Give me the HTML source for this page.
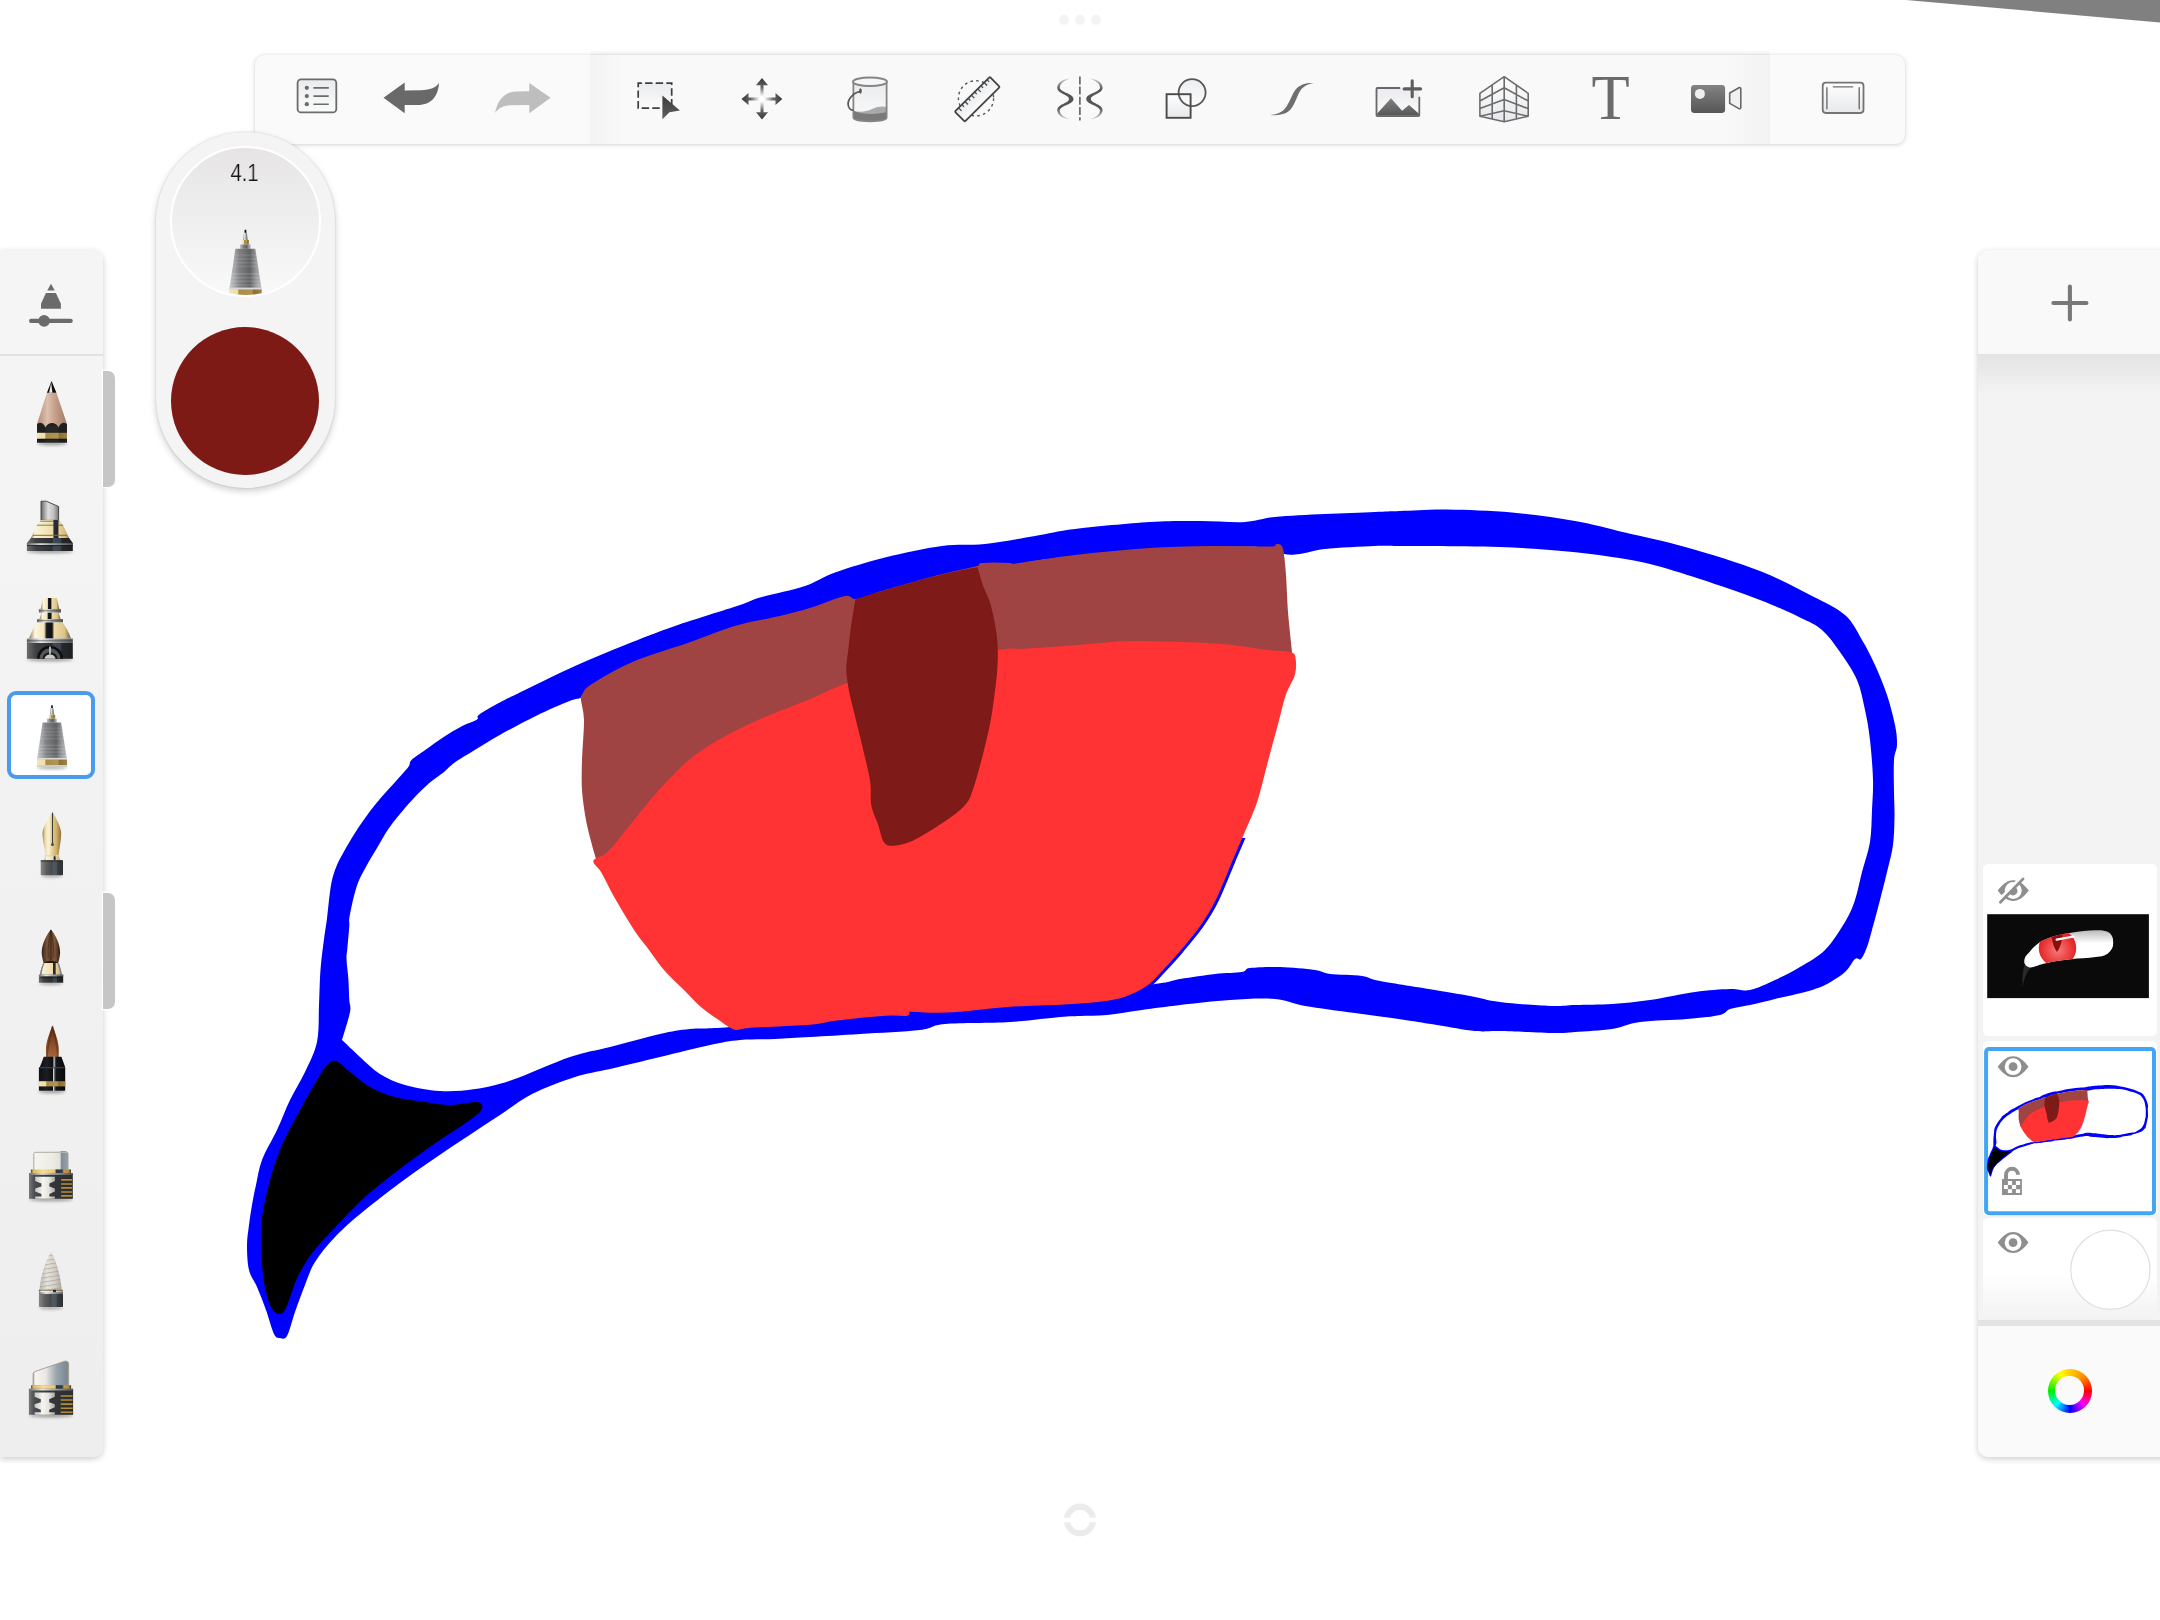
<!DOCTYPE html>
<html lang="en">
<head>
<meta charset="utf-8">
<title>Sketchbook</title>
<style>
*{box-sizing:border-box;margin:0;padding:0}
html,body{width:2160px;height:1620px;overflow:hidden;background:#fff;font-family:"Liberation Sans",sans-serif}
.abs{position:absolute}
#canvas{position:absolute;left:0;top:0;width:2160px;height:1620px}
#wedge{position:absolute;left:0;top:0;width:2160px;height:40px}
.dots{position:absolute;left:1057px;top:14px;width:46px;height:12px}
.dots i{position:absolute;top:1px;width:10px;height:10px;border-radius:50%;background:#f4f4f4}
#toolbar{position:absolute;left:255px;top:55px;width:1650px;height:89px;background:#fafafa;border-radius:9px;box-shadow:0 1px 5px rgba(0,0,0,.16),0 0 2px rgba(0,0,0,.08)}
#toolbar .mid{position:absolute;left:335px;top:0;width:1180px;height:89px;background:linear-gradient(90deg,#f3f3f3 0,#f9f9f9 34px,#f9f9f9 1130px,#f3f3f3 1180px)}
#toolbar .midtop{position:absolute;left:335px;top:-6px;width:1180px;height:6px;background:linear-gradient(180deg,rgba(0,0,0,0),rgba(0,0,0,.045))}
#toolbar svg{position:absolute;left:0;top:0}
#left{position:absolute;left:0;top:250px;width:103px;height:1207px;background:linear-gradient(180deg,#f5f5f5,#eeeeee);border-radius:0 10px 10px 0;box-shadow:0 2px 6px rgba(0,0,0,.2)}
#left .hd{position:absolute;left:0;top:0;width:103px;height:106px;background:#f5f5f5;border-bottom:2px solid #e2e2e2;border-radius:0 9px 0 0}
.grip{position:absolute;left:103px;width:12px;background:#c6c6c6;border-radius:0 7px 7px 0;box-shadow:0 0 0 1.200px #fff}
#sel{position:absolute;left:7px;top:691px;width:88px;height:88px;border:4.300px solid #4a9beb;border-radius:9px;background:#fff}
#puck{position:absolute;left:155.500px;top:131.500px;width:179px;height:356.500px;border-radius:89.500px;background:#f4f4f4;box-shadow:0 3px 7px rgba(0,0,0,.2),0 0 2px rgba(0,0,0,.14)}
#puck .b{position:absolute;left:14px;top:14px;width:151px;height:151px;border-radius:50%;background:linear-gradient(180deg,#e6e4e4 0,#efeeee 45%,#f9f9f9 100%);border:2px solid #fff;overflow:hidden}
#puck .b svg{position:absolute;left:-2px;top:-2px}
#puck .c{position:absolute;left:15.500px;top:195.500px;width:148px;height:148px;border-radius:50%;background:#7e1a16}
#puck .t{position:absolute;left:-1px;top:29.500px;width:179px;text-align:center;font-size:23.500px;line-height:24px;color:#161616;transform:scaleX(.86);will-change:transform;-webkit-text-stroke:.2px #ebeaea}
#right{position:absolute;left:1978px;top:250px;width:190px;height:1207px;background:#f3f3f3;border-radius:10px 0 0 10px;box-shadow:0 2px 6px rgba(0,0,0,.2);overflow:hidden}
#right .hd{position:absolute;left:0;top:0;width:190px;height:104px;background:#f9f9f9}
#right .sh{position:absolute;left:0;top:104px;width:190px;height:40px;background:linear-gradient(180deg,#e3e3e3,#f3f3f3)}
#right .ft{position:absolute;left:0;top:1070px;width:190px;height:137px;background:#fafafa;border-top:6px solid #e3e3e3}
#wheel{position:absolute;left:2047.600px;top:1368.500px;width:44.400px;height:44.400px;border-radius:50%;background:conic-gradient(from 90deg,#ff0000 0deg,#ff00ff 45deg,#0000ff 90deg,#00ffff 135deg,#00ee00 180deg,#ffff00 240deg,#ff8800 315deg,#ff0000 360deg)}
#wheel i{position:absolute;left:7.800px;top:7.800px;width:28.800px;height:28.800px;border-radius:50%;background:#fafafa}
.layer{position:absolute;left:5px;width:174px;background:#fff;border-radius:5px}
#sync{position:absolute;left:1060px;top:1500px;width:40px;height:40px}
</style>
</head>
<body>
<svg id="canvas" viewBox="0 0 2160 1620">
<!--DRAWING-->
<g id="eye">
<path fill="#0000FF" d="M280.0 1338.0C277.8 1337.7 276.3 1338.7 274.0 1334.0C271.7 1329.3 268.8 1317.8 266.0 1310.0C263.2 1302.2 259.8 1293.7 257.0 1287.0C254.2 1280.3 250.7 1277.0 249.0 1270.0C247.3 1263.0 247.0 1252.5 247.0 1245.0C247.0 1237.5 248.2 1231.7 249.0 1225.0C249.8 1218.3 250.8 1211.7 252.0 1205.0C253.2 1198.3 254.3 1192.5 256.0 1185.0C257.7 1177.5 258.5 1169.2 262.0 1160.0C265.5 1150.8 272.3 1140.0 277.0 1130.0C281.7 1120.0 285.3 1109.7 290.0 1100.0C294.7 1090.3 300.5 1081.7 305.0 1072.0C309.5 1062.3 314.7 1053.2 317.0 1042.0C319.3 1030.8 318.5 1015.7 319.0 1005.0C319.5 994.3 319.6 985.7 320.0 978.0C320.4 970.3 320.8 965.8 321.5 959.0C322.2 952.2 323.4 943.8 324.3 937.0C325.2 930.2 326.2 924.7 327.0 918.5C327.8 912.3 328.2 906.2 329.0 900.0C329.8 893.8 330.5 887.0 331.7 881.5C332.9 876.0 334.3 871.6 336.3 866.7C338.3 861.8 340.6 857.6 343.7 852.0C346.8 846.4 351.1 839.2 354.8 833.3C358.5 827.4 361.7 822.6 366.0 816.7C370.3 810.8 375.8 803.9 380.7 798.0C385.6 792.1 391.0 786.7 395.6 781.5C400.2 776.3 405.9 770.2 408.5 766.7C411.1 763.2 408.5 763.0 411.3 760.2C414.1 757.4 419.8 753.9 425.2 750.0C430.6 746.1 437.5 741.0 443.7 737.0C449.9 733.0 456.6 728.9 462.2 726.0C467.8 723.1 474.2 721.3 477.0 719.4C479.8 717.5 475.3 717.6 479.0 714.8C482.7 712.0 491.6 706.9 499.3 702.8C507.0 698.7 512.4 696.1 525.0 690.0C537.6 683.9 558.3 673.5 575.0 666.0C591.7 658.5 608.3 651.7 625.0 645.0C641.7 638.3 655.8 632.7 675.0 626.0C694.2 619.3 725.8 609.8 740.0 605.0C754.2 600.2 749.2 600.7 760.0 597.5C770.8 594.3 792.5 590.2 805.0 586.0C817.5 581.8 821.7 577.2 835.0 572.5C848.3 567.8 867.2 561.9 885.0 557.5C902.8 553.1 925.3 548.2 942.0 546.0C958.7 543.8 969.5 545.7 985.0 544.0C1000.5 542.3 1020.0 538.5 1035.0 536.0C1050.0 533.5 1055.8 531.3 1075.0 529.0C1094.2 526.7 1129.2 523.3 1150.0 522.0C1170.8 520.7 1184.2 521.0 1200.0 521.0C1215.8 521.0 1232.5 522.7 1245.0 522.0C1257.5 521.3 1261.7 518.3 1275.0 517.0C1288.3 515.7 1308.3 514.8 1325.0 514.0C1341.7 513.2 1362.5 512.5 1375.0 512.0C1387.5 511.5 1388.0 511.4 1400.0 511.0C1412.0 510.6 1428.3 509.2 1447.0 509.5C1465.7 509.8 1490.7 510.6 1512.0 512.5C1533.3 514.4 1556.2 517.7 1575.0 521.0C1593.8 524.3 1606.3 528.1 1625.0 532.5C1643.7 536.9 1664.5 541.1 1687.0 547.5C1709.5 553.9 1739.2 562.9 1760.0 571.0C1780.8 579.1 1797.8 588.7 1812.0 596.0C1826.2 603.3 1836.7 607.7 1845.0 615.0C1853.3 622.3 1857.0 631.7 1862.0 640.0C1867.0 648.3 1870.8 655.8 1875.0 665.0C1879.2 674.2 1883.7 685.0 1887.0 695.0C1890.3 705.0 1893.3 716.7 1895.0 725.0C1896.7 733.3 1897.2 739.2 1897.0 745.0C1896.8 750.8 1894.5 752.2 1894.0 760.0C1893.5 767.8 1893.9 782.5 1894.0 792.0C1894.1 801.5 1894.7 808.2 1894.5 817.0C1894.3 825.8 1894.2 835.8 1893.0 845.0C1891.8 854.2 1889.2 862.8 1887.0 872.0C1884.8 881.2 1882.5 890.3 1880.0 900.0C1877.5 909.7 1874.2 922.2 1872.0 930.0C1869.8 937.8 1868.8 942.2 1867.0 947.0C1865.2 951.8 1863.0 957.0 1861.0 959.0C1859.0 961.0 1857.7 956.8 1855.0 959.0C1852.3 961.2 1850.0 967.7 1845.0 972.0C1840.0 976.3 1831.7 981.7 1825.0 985.0C1818.3 988.3 1813.3 989.7 1805.0 992.0C1796.7 994.3 1784.2 996.8 1775.0 999.0C1765.8 1001.2 1757.5 1003.3 1750.0 1005.0C1742.5 1006.7 1735.0 1007.3 1730.0 1009.0C1725.0 1010.7 1727.2 1013.3 1720.0 1015.0C1712.8 1016.7 1700.3 1017.8 1687.0 1019.0C1673.7 1020.2 1652.5 1020.3 1640.0 1022.0C1627.5 1023.7 1622.8 1027.3 1612.0 1029.0C1601.2 1030.7 1584.5 1031.3 1575.0 1032.0C1565.5 1032.7 1567.5 1033.2 1555.0 1033.0C1542.5 1032.8 1513.3 1031.3 1500.0 1031.0C1486.7 1030.7 1485.5 1032.0 1475.0 1031.0C1464.5 1030.0 1448.7 1026.8 1437.0 1025.0C1425.3 1023.2 1418.7 1022.0 1405.0 1020.0C1391.3 1018.0 1371.7 1015.3 1355.0 1013.0C1338.3 1010.7 1318.3 1008.3 1305.0 1006.0C1291.7 1003.7 1287.5 1000.0 1275.0 999.0C1262.5 998.0 1245.8 999.0 1230.0 1000.0C1214.2 1001.0 1194.7 1003.3 1180.0 1005.0C1165.3 1006.7 1154.2 1008.3 1142.0 1010.0C1129.8 1011.7 1117.3 1014.0 1107.0 1015.0C1096.7 1016.0 1087.8 1015.7 1080.0 1016.0C1072.2 1016.3 1071.7 1016.0 1060.0 1017.0C1048.3 1018.0 1029.2 1020.8 1010.0 1022.0C990.8 1023.2 960.0 1022.7 945.0 1024.0C930.0 1025.3 934.2 1028.3 920.0 1030.0C905.8 1031.7 878.3 1032.8 860.0 1034.0C841.7 1035.2 824.2 1036.2 810.0 1037.0C795.8 1037.8 786.7 1038.5 775.0 1039.0C763.3 1039.5 750.8 1039.0 740.0 1040.0C729.2 1041.0 723.3 1042.2 710.0 1045.0C696.7 1047.8 676.7 1053.0 660.0 1057.0C643.3 1061.0 624.2 1065.7 610.0 1069.0C595.8 1072.3 588.0 1072.8 575.0 1077.0C562.0 1081.2 544.5 1087.7 532.0 1094.0C519.5 1100.3 511.7 1107.3 500.0 1115.0C488.3 1122.7 476.2 1130.5 462.0 1140.0C447.8 1149.5 431.2 1160.3 415.0 1172.0C398.8 1183.7 378.3 1199.2 365.0 1210.0C351.7 1220.8 343.3 1228.3 335.0 1237.0C326.7 1245.7 320.0 1254.0 315.0 1262.0C310.0 1270.0 308.3 1276.7 305.0 1285.0C301.7 1293.3 298.0 1303.5 295.0 1312.0C292.0 1320.5 289.5 1331.7 287.0 1336.0C284.5 1340.3 282.2 1338.3 280.0 1338.0Z"/>
<path fill="#fff" d="M342.0 1040.0C343.3 1035.3 348.8 1018.7 350.0 1012.0C351.2 1005.3 349.6 1005.7 349.3 1000.0C349.0 994.3 348.8 984.8 348.3 978.0C347.8 971.2 346.6 964.0 346.5 959.0C346.4 954.0 346.9 953.5 347.4 948.0C347.9 942.5 349.0 930.9 349.3 926.0C349.6 921.1 348.7 922.8 349.3 918.5C349.9 914.2 351.5 906.2 353.0 900.0C354.5 893.8 356.3 887.0 358.5 881.5C360.7 876.0 362.9 872.3 366.0 866.7C369.1 861.1 373.3 854.2 377.0 848.0C380.7 841.8 384.3 835.1 388.0 829.6C391.7 824.1 395.0 820.1 399.3 814.8C403.6 809.5 409.1 803.2 414.0 798.0C418.9 792.8 424.1 787.6 429.0 783.3C433.9 779.0 439.5 775.6 443.7 772.2C447.9 768.8 449.4 766.4 454.0 763.0C458.6 759.6 463.9 756.6 471.5 752.0C479.1 747.4 488.5 741.2 499.3 735.2C510.1 729.2 524.6 721.4 536.3 715.7C548.0 710.0 562.0 704.1 569.6 701.0C577.2 697.9 578.3 699.7 582.0 697.0C585.7 694.3 583.2 690.8 592.0 685.0C600.8 679.2 619.5 668.7 635.0 662.0C650.5 655.3 668.3 650.8 685.0 645.0C701.7 639.2 719.2 631.7 735.0 627.0C750.8 622.3 767.5 620.0 780.0 617.0C792.5 614.0 799.2 612.3 810.0 609.0C820.8 605.7 837.3 598.5 845.0 597.0C852.7 595.5 849.3 601.0 856.0 600.0C862.7 599.0 871.8 594.8 885.0 591.0C898.2 587.2 920.0 580.7 935.0 577.0C950.0 573.3 966.7 571.2 975.0 569.0C983.3 566.8 978.8 564.7 985.0 564.0C991.2 563.3 1003.7 565.5 1012.0 565.0C1020.3 564.5 1024.5 562.5 1035.0 561.0C1045.5 559.5 1055.8 558.0 1075.0 556.0C1094.2 554.0 1127.2 550.5 1150.0 549.0C1172.8 547.5 1192.0 547.2 1212.0 547.0C1232.0 546.8 1258.0 546.3 1270.0 547.5C1282.0 548.7 1279.0 552.9 1284.0 554.0C1289.0 555.1 1293.2 554.8 1300.0 554.0C1306.8 553.2 1312.5 550.3 1325.0 549.0C1337.5 547.7 1362.5 546.5 1375.0 546.0C1387.5 545.5 1390.0 546.0 1400.0 546.0C1410.0 546.0 1418.3 545.8 1435.0 546.0C1451.7 546.2 1478.8 546.2 1500.0 547.0C1521.2 547.8 1543.3 549.3 1562.0 551.0C1580.7 552.7 1597.3 554.8 1612.0 557.0C1626.7 559.2 1635.3 560.3 1650.0 564.0C1664.7 567.7 1681.7 573.0 1700.0 579.0C1718.3 585.0 1743.3 593.6 1760.0 600.0C1776.7 606.4 1789.7 612.5 1800.0 617.5C1810.3 622.5 1815.3 624.2 1822.0 630.0C1828.7 635.8 1834.2 643.7 1840.0 652.0C1845.8 660.3 1852.8 670.3 1857.0 680.0C1861.2 689.7 1862.8 700.0 1865.0 710.0C1867.2 720.0 1868.7 728.3 1870.0 740.0C1871.3 751.7 1872.7 768.3 1873.0 780.0C1873.3 791.7 1872.5 799.7 1872.0 810.0C1871.5 820.3 1871.7 831.7 1870.0 842.0C1868.3 852.3 1864.5 862.3 1862.0 872.0C1859.5 881.7 1857.8 891.7 1855.0 900.0C1852.2 908.3 1850.0 913.7 1845.0 922.0C1840.0 930.3 1832.5 942.5 1825.0 950.0C1817.5 957.5 1808.3 962.0 1800.0 967.0C1791.7 972.0 1783.3 976.2 1775.0 980.0C1766.7 983.8 1757.5 988.5 1750.0 990.0C1742.5 991.5 1739.2 988.7 1730.0 989.0C1720.8 989.3 1708.3 990.2 1695.0 992.0C1681.7 993.8 1663.8 998.0 1650.0 1000.0C1636.2 1002.0 1624.5 1003.2 1612.0 1004.0C1599.5 1004.8 1585.3 1004.7 1575.0 1005.0C1564.7 1005.3 1562.5 1006.5 1550.0 1006.0C1537.5 1005.5 1513.3 1003.7 1500.0 1002.0C1486.7 1000.3 1480.8 998.0 1470.0 996.0C1459.2 994.0 1450.0 992.5 1435.0 990.0C1420.0 987.5 1392.2 983.3 1380.0 981.0C1367.8 978.7 1370.3 977.2 1362.0 976.0C1353.7 974.8 1337.8 975.0 1330.0 974.0C1322.2 973.0 1323.3 971.2 1315.0 970.0C1306.7 968.8 1290.8 967.3 1280.0 967.0C1269.2 966.7 1256.3 967.2 1250.0 968.0C1243.7 968.8 1247.8 971.0 1242.0 972.0C1236.2 973.0 1225.3 972.8 1215.0 974.0C1204.7 975.2 1191.3 977.2 1180.0 979.0C1168.7 980.8 1177.0 981.5 1147.0 985.0C1117.0 988.5 1049.5 995.0 1000.0 1000.0C950.5 1005.0 895.0 1010.5 850.0 1015.0C805.0 1019.5 756.7 1024.7 730.0 1027.0C703.3 1029.3 701.7 1027.8 690.0 1029.0C678.3 1030.2 673.3 1031.0 660.0 1034.0C646.7 1037.0 625.0 1043.2 610.0 1047.0C595.0 1050.8 586.3 1051.5 570.0 1057.0C553.7 1062.5 527.8 1074.7 512.0 1080.0C496.2 1085.3 487.0 1087.2 475.0 1089.0C463.0 1090.8 451.7 1091.7 440.0 1091.0C428.3 1090.3 415.0 1087.8 405.0 1085.0C395.0 1082.2 387.5 1078.7 380.0 1074.0C372.5 1069.3 366.3 1062.7 360.0 1057.0C353.7 1051.3 345.0 1042.8 342.0 1040.0Z"/>
<path fill="#000" d="M336.0 1061.0C339.8 1062.2 344.3 1067.7 350.0 1072.0C355.7 1076.3 362.5 1082.8 370.0 1087.0C377.5 1091.2 385.8 1094.5 395.0 1097.0C404.2 1099.5 415.8 1100.7 425.0 1102.0C434.2 1103.3 441.3 1105.0 450.0 1105.0C458.7 1105.0 471.7 1101.3 477.0 1102.0C482.3 1102.7 483.2 1106.0 482.0 1109.0C480.8 1112.0 477.0 1114.8 470.0 1120.0C463.0 1125.2 450.8 1132.5 440.0 1140.0C429.2 1147.5 417.5 1155.5 405.0 1165.0C392.5 1174.5 376.7 1186.6 365.0 1197.0C353.3 1207.4 343.8 1218.2 335.0 1227.5C326.2 1236.8 318.8 1244.2 312.5 1252.5C306.2 1260.8 301.2 1270.0 297.5 1277.5C293.8 1285.0 291.8 1292.6 290.0 1297.5C288.2 1302.4 287.7 1304.5 286.5 1307.0C285.3 1309.5 284.3 1311.3 283.0 1312.5C281.7 1313.7 280.1 1314.1 278.7 1314.0C277.3 1313.9 275.8 1313.2 274.5 1312.0C273.2 1310.8 272.2 1309.4 271.0 1307.0C269.8 1304.6 268.7 1302.0 267.5 1297.5C266.3 1293.0 264.8 1287.9 263.7 1280.0C262.6 1272.1 261.5 1260.4 261.2 1250.0C260.9 1239.6 260.5 1229.2 262.0 1217.5C263.5 1205.8 266.7 1192.1 270.0 1180.0C273.3 1167.9 277.0 1156.7 282.0 1145.0C287.0 1133.3 294.2 1120.8 300.0 1110.0C305.8 1099.2 312.5 1087.5 317.0 1080.0C321.5 1072.5 323.8 1068.2 327.0 1065.0C330.2 1061.8 332.2 1059.8 336.0 1061.0Z"/>
<clipPath id="slc"><rect x="1100" y="838" width="200" height="150"/></clipPath>
<path fill="none" stroke="#0000FF" stroke-width="4" clip-path="url(#slc)" d="M1268.6 762.6C1266.9 768.9 1261.9 790.1 1258.6 800.6C1255.3 811.1 1252.8 815.6 1248.6 825.6C1244.4 835.6 1238.9 848.1 1233.6 860.6C1228.3 873.1 1221.9 889.8 1216.6 900.6C1211.3 911.4 1207.4 917.3 1201.6 925.6C1195.8 933.9 1187.9 943.1 1181.6 950.6C1175.3 958.1 1169.1 964.8 1163.6 970.6C1158.1 976.4 1154.8 981.3 1148.6 985.6C1142.4 989.9 1130.3 994.8 1126.6 996.6"/>
<path fill="#A04343" stroke="#A04343" stroke-width="2" stroke-linejoin="round" d="M598.0 862.0C597.2 859.2 594.8 852.0 593.0 845.0C591.2 838.0 588.7 829.2 587.0 820.0C585.3 810.8 583.7 800.0 583.0 790.0C582.3 780.0 582.7 771.7 583.0 760.0C583.3 748.3 585.2 730.0 585.0 720.0C584.8 710.0 582.3 704.2 582.0 700.0C581.7 695.8 581.3 697.5 583.0 695.0C584.7 692.5 583.3 690.5 592.0 685.0C600.7 679.5 619.5 668.7 635.0 662.0C650.5 655.3 668.3 650.8 685.0 645.0C701.7 639.2 719.2 631.7 735.0 627.0C750.8 622.3 767.5 620.0 780.0 617.0C792.5 614.0 799.2 612.3 810.0 609.0C820.8 605.7 837.3 598.5 845.0 597.0C852.7 595.5 849.3 601.0 856.0 600.0C862.7 599.0 871.8 594.8 885.0 591.0C898.2 587.2 919.7 581.0 935.0 577.0C950.3 573.0 969.2 569.2 977.0 567.0C984.8 564.8 976.5 564.5 982.0 564.0C987.5 563.5 1005.0 563.8 1010.0 564.0C1015.0 564.2 1001.2 566.3 1012.0 565.0C1022.8 563.7 1052.0 558.7 1075.0 556.0C1098.0 553.3 1127.2 550.5 1150.0 549.0C1172.8 547.5 1192.0 547.2 1212.0 547.0C1232.0 546.8 1259.2 547.8 1270.0 547.5C1280.8 547.2 1275.0 544.8 1277.0 545.0C1279.0 545.2 1280.7 544.0 1282.0 549.0C1283.3 554.0 1284.2 564.5 1285.0 575.0C1285.8 585.5 1286.0 599.2 1287.0 612.0C1288.0 624.8 1290.2 643.7 1291.0 652.0C1291.8 660.3 1291.8 660.3 1292.0 662.0L1200 760L900 800L700 880Z"/>
<path fill="#FF3333" stroke="#FF3333" stroke-width="1.5" stroke-linejoin="round" d="M594.0 861.0C594.5 858.2 601.5 857.7 605.0 855.0C608.5 852.3 610.0 850.8 615.0 845.0C620.0 839.2 627.5 829.2 635.0 820.0C642.5 810.8 650.8 800.0 660.0 790.0C669.2 780.0 680.0 768.3 690.0 760.0C700.0 751.7 708.3 746.7 720.0 740.0C731.7 733.3 745.0 726.7 760.0 720.0C775.0 713.3 795.5 706.0 810.0 700.0C824.5 694.0 832.0 689.0 847.0 684.0C862.0 679.0 875.0 675.5 900.0 670.0C925.0 664.5 976.2 654.4 997.0 651.0C1017.8 647.6 1012.0 650.3 1025.0 649.5C1038.0 648.7 1058.3 647.2 1075.0 646.0C1091.7 644.8 1108.3 642.6 1125.0 642.0C1141.7 641.4 1158.3 642.0 1175.0 642.5C1191.7 643.0 1209.2 643.6 1225.0 645.0C1240.8 646.4 1259.0 649.7 1270.0 651.0C1281.0 652.3 1286.8 651.5 1291.0 653.0C1295.2 654.5 1294.5 656.3 1295.0 660.0C1295.5 663.7 1295.7 669.2 1294.0 675.0C1292.3 680.8 1287.8 686.7 1285.0 695.0C1282.2 703.3 1280.0 713.8 1277.0 725.0C1274.0 736.2 1270.3 749.5 1267.0 762.0C1263.7 774.5 1260.3 789.5 1257.0 800.0C1253.7 810.5 1251.2 815.0 1247.0 825.0C1242.8 835.0 1237.3 847.5 1232.0 860.0C1226.7 872.5 1220.3 889.2 1215.0 900.0C1209.7 910.8 1205.8 916.7 1200.0 925.0C1194.2 933.3 1186.3 942.5 1180.0 950.0C1173.7 957.5 1167.5 964.2 1162.0 970.0C1156.5 975.8 1153.2 980.7 1147.0 985.0C1140.8 989.3 1132.8 993.3 1125.0 996.0C1117.2 998.7 1110.8 999.7 1100.0 1001.0C1089.2 1002.3 1075.0 1003.2 1060.0 1004.0C1045.0 1004.8 1026.7 1004.8 1010.0 1006.0C993.3 1007.2 973.3 1010.0 960.0 1011.0C946.7 1012.0 938.3 1012.0 930.0 1012.0C921.7 1012.0 913.8 1010.5 910.0 1011.0C906.2 1011.5 911.2 1014.3 907.0 1015.0C902.8 1015.7 897.0 1014.2 885.0 1015.0C873.0 1015.8 847.5 1018.5 835.0 1020.0C822.5 1021.5 824.2 1022.8 810.0 1024.0C795.8 1025.2 762.5 1026.2 750.0 1027.0C737.5 1027.8 740.0 1030.2 735.0 1029.0C730.0 1027.8 725.5 1023.7 720.0 1020.0C714.5 1016.3 707.8 1012.0 702.0 1007.0C696.2 1002.0 691.2 996.2 685.0 990.0C678.8 983.8 670.8 976.7 665.0 970.0C659.2 963.3 655.0 956.7 650.0 950.0C645.0 943.3 640.8 938.8 635.0 930.0C629.2 921.2 620.5 906.7 615.0 897.0C609.5 887.3 605.5 878.0 602.0 872.0C598.5 866.0 593.5 863.8 594.0 861.0Z"/>
<path fill="#7E1A17" stroke="#7E1A17" stroke-width="1.5" stroke-linejoin="round" d="M856.0 600.0C855.3 604.2 853.2 616.7 852.0 625.0C850.8 633.3 849.8 642.5 849.0 650.0C848.2 657.5 846.8 663.0 847.0 670.0C847.2 677.0 848.5 684.2 850.0 692.0C851.5 699.8 853.7 707.3 856.0 717.0C858.3 726.7 861.5 739.2 864.0 750.0C866.5 760.8 869.7 772.8 871.0 782.0C872.3 791.2 870.7 797.8 872.0 805.0C873.3 812.2 877.0 819.0 879.0 825.0C881.0 831.0 881.8 837.7 884.0 841.0C886.2 844.3 887.7 845.0 892.0 845.0C896.3 845.0 903.7 843.5 910.0 841.0C916.3 838.5 923.3 834.0 930.0 830.0C936.7 826.0 944.2 821.3 950.0 817.0C955.8 812.7 961.3 808.5 965.0 804.0C968.7 799.5 969.2 798.2 972.0 790.0C974.8 781.8 979.0 766.7 982.0 755.0C985.0 743.3 987.8 731.7 990.0 720.0C992.2 708.3 993.8 695.0 995.0 685.0C996.2 675.0 996.8 668.3 997.0 660.0C997.2 651.7 997.2 644.2 996.0 635.0C994.8 625.8 992.3 613.3 990.0 605.0C987.7 596.7 984.2 591.2 982.0 585.0C979.8 578.8 977.8 570.8 977.0 568.0C970.0 569.5 950.3 573.2 935.0 577.0C919.7 580.8 898.2 587.2 885.0 591.0C871.8 594.8 860.8 598.5 856.0 600.0Z"/>
</g>
<!--/DRAWING-->
</svg>
<svg id="wedge" viewBox="0 0 2160 40"><polygon points="1906,0 2160,0 2160,22.5" fill="#808080"/></svg>
<div class="dots"><i style="left:2px"></i><i style="left:18px"></i><i style="left:34px"></i></div>

<div id="toolbar"><div class="mid"></div><div class="midtop"></div>
<svg id="tbicons" width="1650" height="89" viewBox="255 55 1650 89">
<!--TBICONS-->
<defs>
<linearGradient id="gl" x1="0" y1="0" x2="0" y2="1"><stop offset="0" stop-color="#e9ebee"/><stop offset="1" stop-color="#fbfbfb"/></linearGradient>
<linearGradient id="gl2" x1="0" y1="0" x2="0" y2="1"><stop offset="0" stop-color="#ffffff"/><stop offset="1" stop-color="#e6e8eb"/></linearGradient>
<linearGradient id="gd" x1="0" y1="0" x2="0" y2="1"><stop offset="0" stop-color="#838383"/><stop offset="1" stop-color="#565656"/></linearGradient>
<linearGradient id="gcur" x1="0" y1="0" x2="0" y2="1"><stop offset="0" stop-color="#3a3a3a"/><stop offset="1" stop-color="#606060"/></linearGradient>
<radialGradient id="gmv" cx="762" cy="98.9" r="21" gradientUnits="userSpaceOnUse"><stop offset="0" stop-color="#fff"/><stop offset=".12" stop-color="#fff"/><stop offset=".55" stop-color="#666"/><stop offset="1" stop-color="#333"/></radialGradient>
<linearGradient id="gsym" x1="0" y1="76" x2="0" y2="121" gradientUnits="userSpaceOnUse"><stop offset="0" stop-color="#555" stop-opacity=".15"/><stop offset=".3" stop-color="#555"/><stop offset=".7" stop-color="#555"/><stop offset="1" stop-color="#555" stop-opacity=".15"/></linearGradient>
</defs>
<!-- list -->
<rect x="297.6" y="79.4" width="38.7" height="33" rx="3.5" fill="url(#gl)" stroke="#6b6b6b" stroke-width="1.8"/>
<g fill="#6b6b6b"><circle cx="306.8" cy="87.8" r="2.1"/><circle cx="306.8" cy="96.1" r="2.1"/><circle cx="306.8" cy="104.2" r="2.1"/>
<rect x="313.2" y="87" width="15.8" height="1.7" rx=".8"/><rect x="313.2" y="95.2" width="15.8" height="1.7" rx=".8"/><rect x="313.2" y="103.4" width="15.8" height="1.7" rx=".8"/></g>
<!-- undo / redo -->
<path fill="#696969" d="M383.5 97.8L404.7 82.5L404.7 90.4L421 90.2C430 90 436 87.5 439 83C438.5 94 433 105.2 417 105.1L404.7 105.1L404.7 113.2Z"/>
<path fill="#bebebe" d="M550.6 97.8L529.3 82.9L529.3 91.2L517 91.4C503 91.6 497.2 102 495 113C499 107.6 504 105.3 512 105.2L529.3 105.1L529.3 113.2Z"/>
<!-- select -->
<rect x="638.2" y="83.1" width="33.5" height="25" fill="url(#gl)" stroke="#3e3e3e" stroke-width="1.7" stroke-dasharray="7.4 3.2" stroke-dashoffset="3.7"/>
<path fill="url(#gcur)" d="M662.4 95.4L679.9 110.6L669.5 112.2L662.4 119.2Z"/>
<!-- move -->
<path fill="url(#gmv)" d="M762 78L768 85.3L763.5 85.3L763.5 97.4L775.5 97.4L775.5 92.9L782.3 98.9L775.5 104.9L775.5 100.4L763.5 100.4L763.5 112.3L768 112.3L762 119.5L756 112.3L760.5 112.3L760.5 100.4L748.5 100.4L748.5 104.9L741.5 98.9L748.5 92.9L748.5 97.4L760.5 97.4L760.5 85.3L756 85.3Z"/>
<!-- bucket -->
<path d="M853.4 82.5L853.4 117.5C853.4 122.5 886.6 122.5 886.6 117.5L886.6 82.5Z" fill="url(#gl)"/>
<path d="M853.4 110.5C858 112.5 866 112 872 109C878 106 883 106 886.6 107L886.6 117.5C886.6 122.5 853.4 122.5 853.4 117.5Z" fill="#a9a9a9"/>
<path d="M853.4 111C860 113.5 870 114.5 878 113.5C882 113 885 112.5 886.6 112L886.6 117.5C886.6 122.5 853.4 122.5 853.4 117.5Z" fill="#7a7a7a"/>
<path d="M853.4 82.5L853.4 117.5C853.4 122.5 886.6 122.5 886.6 117.5L886.6 82.5" fill="none" stroke="#858585" stroke-width="1.8"/>
<ellipse cx="870" cy="81.8" rx="17" ry="4.2" fill="#f6f6f6" stroke="#858585" stroke-width="2"/>
<path d="M860.3 91.3C852 93 846.5 101 848.5 106.5C849.5 109 851.5 110.3 853.4 110.4" fill="none" stroke="#575757" stroke-width="1.7"/>
<ellipse cx="860.4" cy="91" rx="1.4" ry="2.8" fill="#575757"/>
<!-- ruler -->
<circle cx="976" cy="98.3" r="17.6" fill="none" stroke="#555" stroke-width="1.4" stroke-dasharray="2.6 3.3"/>
<g transform="rotate(-44.7 977.3 99.3)"><rect x="952.7" y="92.2" width="49.3" height="14.2" rx="1" fill="url(#gl)" stroke="#444" stroke-width="1.8"/>
<path d="M958 92.2v4.2M962.5 92.2v3M967 92.2v4.2M971.5 92.2v3M976 92.2v4.2M980.5 92.2v3M985 92.2v4.2M989.5 92.2v3M994 92.2v4.2M998 92.2v3" stroke="#444" stroke-width="1.2" fill="none"/></g>
<!-- symmetry -->
<path d="M1079.9 76.4V120.6" stroke="#555" stroke-width="1.5" stroke-dasharray="8 2.2" fill="none"/>
<path id="symL" d="M1070.600 78.600C1063 79 1057.200 83 1057.200 87.800C1057.200 94 1069 94.500 1069 98.900C1069 103.300 1057.200 104 1057.200 110C1057.200 115 1063 119 1070.600 119.200C1064.500 118 1059.800 114.500 1059.800 110.500C1059.800 105.500 1073.500 104.500 1073.500 98.900C1073.500 93.300 1059.800 92.500 1059.800 87.500C1059.800 83.500 1064.500 80 1070.600 78.600Z" fill="url(#gsym)"/>
<use href="#symL" transform="translate(2159.8 0) scale(-1 1)"/>
<!-- shapes -->
<rect x="1166.600" y="94.200" width="24" height="23.600" fill="url(#gl2)"/><circle cx="1192.100" cy="92.600" r="13.500" fill="url(#gl)" fill-opacity=".8"/>
<circle cx="1192.100" cy="92.600" r="13.500" fill="none" stroke="#585858" stroke-width="1.800"/><rect x="1166.600" y="94.200" width="24" height="23.600" fill="none" stroke="#4a4a4a" stroke-width="1.900"/>
<!-- curve -->
<path fill="#6f6f6f" d="M1270.1 114.9C1276 114.6 1281 113 1284.5 109C1290 103 1291.5 94.5 1296 89C1300.5 84 1306 82.7 1313.9 82.9C1309 83.8 1304.5 85.5 1301.5 89C1297 94.5 1296 103 1290.5 109.5C1286.5 114 1279 116 1270.1 114.9Z"/>
<!-- image -->
<rect x="1376.6" y="88" width="42.6" height="28" fill="url(#gl)"/>
<path d="M1400.2 88H1377.4C1376.9 88 1376.5 88.4 1376.5 88.9V115.2C1376.500 115.700 1376.900 116.100 1377.400 116.100H1418.400C1418.900 116.100 1419.300 115.700 1419.300 115.200V96.800" fill="none" stroke="#686868" stroke-width="1.8"/>
<path d="M1377.200 113.500L1391 98.200L1402.100 110.700L1409 105.100L1418.700 113.500L1418.700 115.600L1377.200 115.600Z" fill="url(#gd)"/>
<path d="M1412.200 80.800V96.800M1404.200 88.900H1420.600" stroke="#5e5e5e" stroke-width="3.100" stroke-linecap="round" fill="none"/>
<!-- perspective grid -->
<path d="M1504.200 76.700L1479.900 93.300V116.250L1504.200 121.800L1528.200 116.250V93.300Z" fill="url(#gl2)"/>
<path d="M1504.200 76.700L1479.900 93.300V116.250L1504.200 121.800L1528.200 116.250V93.300ZM1504.200 76.700V121.800M1492.200 84.900V119M1516.400 84.900V119M1479.900 101L1504.200 87.800L1528.200 101M1479.900 108.600L1504.200 99.600L1528.200 108.600M1479.900 116.250L1504.200 110.700L1528.200 116.250" fill="none" stroke="#6c6c6c" stroke-width="1.6" stroke-linejoin="round"/>
<!-- T -->
<text x="1610.500" y="119.300" font-family="'Liberation Serif',serif" font-size="62.500" text-anchor="middle" fill="#6b6b6b">T</text>
<!-- camera -->
<rect x="1691" y="84.900" width="34.100" height="28.100" rx="3.400" fill="url(#gd)"/>
<circle cx="1699.900" cy="93.900" r="5" fill="#efefef"/>
<path d="M1729.700 93L1739 87.800C1740 87.300 1740.800 87.800 1740.800 88.800V107.600C1740.800 108.600 1740 109.100 1739 108.600L1729.700 103.400Z" fill="#f1f1f1" stroke="#686868" stroke-width="1.600" stroke-linejoin="round"/>
<!-- fullscreen -->
<rect x="1822.700" y="82.700" width="40.800" height="30.300" rx="3.200" fill="url(#gl2)" stroke="#747474" stroke-width="1.800"/>
<path d="M1833.400 86.900H1852.600M1826.900 87.800V108.700M1859.200 87.800V108.700" stroke="#6e6e6e" stroke-width="1.400" stroke-linecap="round" fill="none"/>
<!--/TBICONS-->
</svg>
</div>

<div id="left"><div class="hd"></div>
<div class="grip" style="top:121px;height:116px"></div>
<div class="grip" style="top:643px;height:116px"></div>
</div>
<div id="sel"></div>
<svg class="abs" id="brushes" style="left:0;top:250px" width="120" height="1207" viewBox="0 250 120 1207">
<!--BRUSHES-->
<defs>
<filter id="bl" x="-30%" y="-100%" width="160%" height="300%"><feGaussianBlur stdDeviation="1.6"/></filter>
<linearGradient id="gold1" x1="0" x2="1"><stop offset="0" stop-color="#8f7a4e"/><stop offset=".1" stop-color="#fbf4da"/><stop offset=".45" stop-color="#f3e3b4"/><stop offset=".58" stop-color="#ecd8a2"/><stop offset=".6" stop-color="#2a2d33"/><stop offset=".7" stop-color="#23262b"/><stop offset=".74" stop-color="#e6d09a"/><stop offset=".92" stop-color="#d3b877"/><stop offset="1" stop-color="#7d6a42"/></linearGradient>
<linearGradient id="gold2" x1="0" x2="1"><stop offset="0" stop-color="#f3e4b0"/><stop offset=".25" stop-color="#f1dfa6"/><stop offset=".3" stop-color="#a98c4a"/><stop offset=".7" stop-color="#b3944f"/><stop offset=".75" stop-color="#8a6f38"/><stop offset="1" stop-color="#a1843f"/></linearGradient>
<linearGradient id="gold3" x1="0" x2="1"><stop offset="0" stop-color="#8d7a55"/><stop offset=".14" stop-color="#fcf6df"/><stop offset=".36" stop-color="#f4e5b8"/><stop offset=".42" stop-color="#17181c"/><stop offset=".55" stop-color="#101114"/><stop offset=".6" stop-color="#f0dca6"/><stop offset=".85" stop-color="#dcc388"/><stop offset="1" stop-color="#6b5a38"/></linearGradient>
<linearGradient id="wood" x1="0" x2="1"><stop offset="0" stop-color="#b48c77"/><stop offset=".35" stop-color="#dcbfae"/><stop offset=".6" stop-color="#c6a08b"/><stop offset="1" stop-color="#a07a66"/></linearGradient>
<linearGradient id="dark1" x1="0" x2="1"><stop offset="0" stop-color="#6a6c6e"/><stop offset=".2" stop-color="#3e4042"/><stop offset=".55" stop-color="#2c2e31"/><stop offset=".58" stop-color="#3f4a55"/><stop offset=".73" stop-color="#3a444e"/><stop offset=".76" stop-color="#26282b"/><stop offset="1" stop-color="#1e1f21"/></linearGradient>
<linearGradient id="dark2" x1="0" x2="1"><stop offset="0" stop-color="#858789"/><stop offset=".25" stop-color="#5c5e60"/><stop offset=".5" stop-color="#48494b"/><stop offset=".56" stop-color="#4e5a64"/><stop offset=".72" stop-color="#47535d"/><stop offset=".76" stop-color="#3b3c3e"/><stop offset="1" stop-color="#2f3032"/></linearGradient>
<linearGradient id="silver" x1="0" x2="1"><stop offset="0" stop-color="#6e7073"/><stop offset=".3" stop-color="#e8eaec"/><stop offset=".6" stop-color="#9da1a5"/><stop offset="1" stop-color="#55585b"/></linearGradient>
<linearGradient id="tipg" x1="0" x2="1"><stop offset="0" stop-color="#5e5e5e"/><stop offset=".12" stop-color="#8d8d8d"/><stop offset=".4" stop-color="#dedede"/><stop offset=".7" stop-color="#c2c2c2"/><stop offset=".93" stop-color="#8a8a8a"/><stop offset="1" stop-color="#4d4d4d"/></linearGradient>
<linearGradient id="cone" x1="0" x2="1"><stop offset="0" stop-color="#c4c6c8"/><stop offset=".16" stop-color="#a3a5a8"/><stop offset=".3" stop-color="#808285"/><stop offset=".5" stop-color="#6c6e70"/><stop offset=".64" stop-color="#5f6163"/><stop offset=".8" stop-color="#8f9194"/><stop offset="1" stop-color="#bcbec0"/></linearGradient>
<linearGradient id="nib" x1="0" x2="1"><stop offset="0" stop-color="#9c7f45"/><stop offset=".12" stop-color="#e6d4a0"/><stop offset=".3" stop-color="#fbf4dc"/><stop offset=".48" stop-color="#ecd79c"/><stop offset=".75" stop-color="#cfae66"/><stop offset="1" stop-color="#8f7138"/></linearGradient>
<linearGradient id="hair1" x1="0" x2="1"><stop offset="0" stop-color="#3a2416"/><stop offset=".3" stop-color="#7a563a"/><stop offset=".5" stop-color="#5b3c26"/><stop offset=".7" stop-color="#7e5a3d"/><stop offset="1" stop-color="#36200f"/></linearGradient>
<linearGradient id="hair2" x1="0" y1="0" x2="0" y2="1"><stop offset="0" stop-color="#5a2e17"/><stop offset=".6" stop-color="#8a4f2c"/><stop offset="1" stop-color="#a5673d"/></linearGradient>
<linearGradient id="blk" x1="0" x2="1"><stop offset="0" stop-color="#101114"/><stop offset=".3" stop-color="#1c1e24"/><stop offset=".52" stop-color="#0c0d10"/><stop offset=".56" stop-color="#e8e8ea"/><stop offset=".6" stop-color="#50525a"/><stop offset=".66" stop-color="#15161a"/><stop offset="1" stop-color="#0a0a0c"/></linearGradient>
<linearGradient id="ers" x1="0" x2="1"><stop offset="0" stop-color="#b0aba2"/><stop offset=".06" stop-color="#f6f4f0"/><stop offset=".55" stop-color="#eeebe5"/><stop offset=".76" stop-color="#e4e1dc"/><stop offset=".8" stop-color="#7f909c"/><stop offset=".93" stop-color="#8d9ba6"/><stop offset="1" stop-color="#a7a49c"/></linearGradient>
<linearGradient id="ers2" x1="0" x2="1"><stop offset="0" stop-color="#a8a49b"/><stop offset=".06" stop-color="#f7f5f0"/><stop offset=".35" stop-color="#ebe8e1"/><stop offset=".65" stop-color="#9aa6af"/><stop offset=".9" stop-color="#7d8d99"/><stop offset="1" stop-color="#8d8b86"/></linearGradient>
<linearGradient id="ebody" x1="0" x2="1"><stop offset="0" stop-color="#77797c"/><stop offset=".12" stop-color="#4b4d50"/><stop offset=".45" stop-color="#36383c"/><stop offset="1" stop-color="#2b2c30"/></linearGradient>
<linearGradient id="egold" x1="0" x2="1"><stop offset="0" stop-color="#3a4650"/><stop offset=".06" stop-color="#e2b95a"/><stop offset=".3" stop-color="#f6dc96"/><stop offset=".6" stop-color="#e8c46c"/><stop offset=".63" stop-color="#2c3842"/><stop offset=".78" stop-color="#33404a"/><stop offset=".82" stop-color="#c89a3c"/><stop offset=".94" stop-color="#b88a30"/><stop offset="1" stop-color="#2c3842"/></linearGradient>
<linearGradient id="spool" x1="0" x2="1"><stop offset="0" stop-color="#c9c7c1"/><stop offset=".4" stop-color="#f6f5f1"/><stop offset=".7" stop-color="#e5e3dd"/><stop offset="1" stop-color="#a9a7a1"/></linearGradient>
<linearGradient id="stump" x1="0" x2="1"><stop offset="0" stop-color="#bdb9b0"/><stop offset=".35" stop-color="#e6e3dc"/><stop offset=".7" stop-color="#d2cec6"/><stop offset="1" stop-color="#aeaaa1"/></linearGradient>
<pattern id="ribs" x="0" y="0" width="10" height="3.4" patternUnits="userSpaceOnUse"><rect width="10" height="1.5" fill="#fff" opacity=".14"/></pattern>
<pattern id="diag" x="0" y="0" width="40" height="4.2" patternUnits="userSpaceOnUse" patternTransform="rotate(-9)"><rect width="40" height="1" fill="#9a968d" opacity=".55"/></pattern>
</defs>
<!-- brush settings icon -->
<g fill="#6b6b6b"><path d="M51 283.800L54.700 290.600H47.300Z"/><path d="M45.900 293.100H55.900L60.900 303.800V308.800H41V303.800Z"/><rect x="29" y="318.750" width="43.800" height="4.300" rx="2.150"/><circle cx="44.100" cy="320.900" r="5.900"/></g>
<!-- pencil -->
<ellipse cx="52" cy="443.500" rx="15" ry="1.800" fill="#000" opacity=".35" filter="url(#bl)"/>
<path d="M46.900 392.700H56.400L67 424V430H37V424Z" fill="url(#wood)"/>
<path d="M51.600 381L56.400 392.700H46.900Z" fill="#0c0c0c"/><path d="M51.200 382.800L52.400 392.700H49.100Z" fill="#eee"/>
<path d="M37 424.500C38.500 422 43 421.500 45.500 427.500C47.500 421.500 56.500 421.500 58.500 427.500C61 421.500 65.500 422 67 424.500V442.700H37Z" fill="#1f1f20"/>
<rect x="45.500" y="426" width="13" height="16.700" fill="#fff" opacity=".035"/>
<rect x="37" y="432.800" width="30" height="6" fill="url(#gold2)"/>
<rect x="37" y="438.800" width="30" height=".8" fill="#000" opacity=".5"/>
<!-- chisel marker -->
<ellipse cx="50" cy="551.500" rx="23" ry="1.800" fill="#000" opacity=".35" filter="url(#bl)"/>
<path d="M41 501.200H46.300L58.600 506.500V520.400H41Z" fill="url(#tipg)" stroke="#4c4c4c" stroke-width="1"/>
<path d="M41 520.100H58.600L63 525L69.100 538H30.900L37 525Z" fill="url(#gold1)"/>
<path d="M40.300 521.200H59.300M37 525.200H63" stroke="#3a3a3a" stroke-width=".9" opacity=".7"/>
<path d="M33 535.300H67" stroke="#8a6d2e" stroke-width="1"/>
<path d="M30.900 538H69.100L72.800 543V551H26.900V543Z" fill="url(#dark1)"/>
<rect x="26.900" y="543.300" width="45.900" height="1.600" fill="url(#silver)"/>
<rect x="26.900" y="545.200" width="45.900" height=".9" fill="#111" opacity=".7"/>
<!-- airbrush -->
<ellipse cx="50" cy="659.500" rx="23" ry="1.800" fill="#000" opacity=".35" filter="url(#bl)"/>
<path d="M43.200 597.900H56.800L59.300 609H40.700Z" fill="url(#gold3)"/>
<rect x="38.900" y="609" width="22" height="3.700" rx=".6" fill="url(#silver)"/><rect x="38.900" y="610.300" width="22" height="1" fill="#444" opacity=".6"/>
<path d="M41.500 612.700H58.500L60.500 618.900H39.500Z" fill="url(#gold3)"/>
<rect x="37" y="618.900" width="26" height="3.700" rx=".6" fill="url(#silver)"/><rect x="37" y="620.200" width="26" height="1" fill="#444" opacity=".6"/>
<path d="M37.500 622.600H62.500C66 627 69 633 71 638.600H29C31 633 34 627 37.500 622.600Z" fill="url(#gold3)"/>
<rect x="26.900" y="638.600" width="45.900" height="4.400" fill="url(#silver)"/><rect x="26.900" y="640.200" width="45.900" height="1.100" fill="#3c3c3c" opacity=".55"/>
<rect x="26.900" y="643" width="45.900" height="15.800" fill="url(#dark1)"/>
<path d="M37 658.800A13 13 0 0 1 63 658.800Z" fill="#0e0f10"/><path d="M39.500 658.800A10.500 10.500 0 0 1 60.500 658.800Z" fill="#55585b"/><path d="M42.500 658.800A7.500 6.500 0 0 1 57.500 658.800Z" fill="#17181a"/><path d="M44.500 658.800A5.500 4.300 0 0 1 55.500 658.800Z" fill="#c9cbcd"/><rect x="49" y="646.500" width="2" height="8" fill="#d9dbdd" opacity=".75"/>
<!-- technical pen (selected) -->
<ellipse cx="52" cy="767.500" rx="15" ry="1.800" fill="#000" opacity=".3" filter="url(#bl)"/>
<g id="techpen">
<rect x="51.100" y="705.300" width="1.700" height="3" fill="#111"/>
<path d="M50.600 708H53.300L54 714.600H50Z" fill="url(#silver)"/>
<rect x="48.800" y="714.600" width="6.400" height="4" fill="url(#gold2)"/>
<rect x="46.900" y="718.600" width="9.900" height="4" fill="url(#cone)"/>
<path d="M42.600 722.600H61.100L67 759.600H37Z" fill="url(#cone)"/>
<path d="M42 726H61.700L64 740H40Z" fill="url(#ribs)" opacity=".7"/><path d="M39.200 744H64.800L66.800 757.500H37.200Z" fill="url(#ribs)"/>
<rect x="37" y="757.800" width="30" height="1.800" fill="#d7d9db"/>
<rect x="37" y="759.600" width="30" height="5.600" fill="url(#gold2)"/>
<rect x="37" y="765.200" width="30" height="1.600" fill="#c9cbcd"/>
</g>
<!-- fountain pen -->
<ellipse cx="52" cy="875.800" rx="11" ry="1.600" fill="#000" opacity=".3" filter="url(#bl)"/>
<path d="M52.500 811.900C56 818 60.500 826 61.100 831.900C61.500 838 59.500 848 58.600 855.300H45.700C44.800 848 42.200 838 42.600 831.900C43.200 826 49 818 52.500 811.900Z" fill="url(#nib)"/>
<path d="M52.500 812.700V844.200" stroke="#3b3b3b" stroke-width="1.100"/><circle cx="52.500" cy="844.400" r="1.500" fill="#4a4a4a"/>
<path d="M45.700 855.300H58.600L59.900 860.200H44.400Z" fill="url(#gold1)"/><rect x="44.800" y="855.300" width="14.600" height="1" fill="#cfd1d3"/>
<rect x="40.700" y="860.200" width="22.300" height="15.100" rx="1" fill="url(#dark2)"/><rect x="40.700" y="860.200" width="22.300" height="1.400" fill="#1e1e1e" opacity=".6"/>
<!-- round brush -->
<ellipse cx="51" cy="983.300" rx="12" ry="1.600" fill="#000" opacity=".3" filter="url(#bl)"/>
<path d="M50.900 929.400C55 934 60.100 944 60.100 951.900C60.100 956 59 960 58 963.500H43.800C42.800 960 41.700 956 41.700 951.900C41.700 944 47 934 50.900 929.400Z" fill="url(#hair1)"/>
<path d="M50.900 930C49 940 47.500 948 48.200 958M50.900 930C52.800 941 54.500 949 53.800 958M50.900 930C50.900 942 51 950 51 960" stroke="#2a170c" stroke-width=".8" fill="none" opacity=".6"/>
<path d="M43.800 963.500C43.800 960 58 960 58 963.500V965H43.800Z" fill="#2a170c"/>
<path d="M43.200 963H58.600C60 966 61.200 970 61.700 974.700H40.100C40.600 970 41.800 966 43.200 963Z" fill="url(#gold1)"/>
<path d="M43.200 963C41.800 966 40.600 970 40.100 974.700H41.600C42.100 970 43.200 966 44.600 963ZM58.600 963C60 966 61.200 970 61.700 974.700H60.200C59.700 970 58.600 966 57.200 963Z" fill="#7e858c"/>
<rect x="38.900" y="974.700" width="24.300" height="8" fill="url(#dark1)"/><rect x="38.900" y="974.700" width="24.300" height="1.500" fill="url(#silver)"/><rect x="40.500" y="977.300" width="21" height="1" fill="#141414" opacity=".7"/>
<!-- brush pen -->
<ellipse cx="52" cy="1091.500" rx="13.500" ry="1.700" fill="#000" opacity=".35" filter="url(#bl)"/>
<path d="M52.500 1025.700C55 1032 58.900 1042 58.900 1049.400C58.900 1052 58.600 1055 58.400 1057.500H46.300C46.100 1055 45.900 1052 45.900 1049.400C45.900 1042 50 1032 52.500 1025.700Z" fill="url(#hair2)"/>
<path d="M52.500 1026C50.500 1036 47.500 1046 47 1057M52.500 1026C54.800 1037 57.600 1046 57.800 1057" stroke="#4a220e" stroke-width="1.600" fill="none" opacity=".45"/>
<path d="M43.800 1056.800H61.400L65.200 1067.300H39.800Z" fill="url(#blk)"/>
<rect x="38.900" y="1067.300" width="26.300" height="23.400" rx=".8" fill="url(#blk)"/>
<rect x="38.900" y="1081.200" width="26.300" height="5.200" fill="url(#gold2)"/>
<rect x="38.900" y="1067.300" width="26.300" height="1" fill="#3a3c42"/>
<!-- hard eraser -->
<ellipse cx="51" cy="1199.500" rx="22" ry="1.800" fill="#000" opacity=".35" filter="url(#bl)"/>
<path d="M33.100 1170V1154.600C33.100 1152.600 34.600 1151.100 36.600 1151.100H65C67 1151.100 68.500 1152.600 68.500 1154.600V1170Z" fill="url(#ers)"/>
<path d="M34.500 1152.400H67" stroke="#b9b4aa" stroke-width="1.200" opacity=".9"/>
<rect x="30.900" y="1169.400" width="40.100" height="3.800" fill="url(#egold)"/>
<rect x="29" y="1173.100" width="43.800" height="25.700" fill="url(#ebody)"/>
<rect x="29" y="1173.100" width="43.800" height="1.700" fill="url(#silver)"/>
<path d="M35.200 1176.800H54.900V1181L49.400 1183.500V1186.500L54.900 1188.500V1191.500L49.400 1194V1196.500H54.900V1198.800H35.200V1196.500H41.400V1194L35.200 1191.500V1188.500L41.400 1186.500V1183.500L35.200 1181Z" fill="url(#spool)"/>
<path d="M61.100 1179.900H72.200M61.100 1184H72.200M61.100 1187.900H72.200M61.100 1192H72.200M61.100 1195.900H72.200" stroke="#b48c3a" stroke-width="1.600"/>
<!-- smudge stump -->
<ellipse cx="51" cy="1307.800" rx="12" ry="1.600" fill="#000" opacity=".3" filter="url(#bl)"/>
<path d="M51 1251.900C56 1260 60.500 1275 61.700 1290H39.500C40.700 1275 46 1260 51 1251.900Z" fill="url(#stump)"/>
<path d="M51 1251.900C56 1260 60.500 1275 61.700 1290H39.500C40.700 1275 46 1260 51 1251.900Z" fill="url(#diag)"/>
<rect x="38.900" y="1289.800" width="23.700" height="2.400" fill="url(#gold1)"/><rect x="38.900" y="1289.800" width="23.700" height=".8" fill="#222" opacity=".7"/>
<rect x="38.900" y="1292.200" width="24.100" height="1.900" fill="url(#silver)"/>
<rect x="38.900" y="1294" width="24.100" height="13" rx=".8" fill="url(#dark2)"/>
<!-- soft eraser -->
<ellipse cx="51" cy="1415.600" rx="22" ry="1.800" fill="#000" opacity=".35" filter="url(#bl)"/>
<path d="M33.100 1385.500V1374.500C33.100 1373 33.800 1372 35 1371.500L64.500 1361.300C66.800 1360.500 68.600 1361.800 68.600 1364V1385.500Z" fill="url(#ers2)" stroke="#9d9990" stroke-width=".9"/>
<rect x="31.100" y="1385.200" width="40" height="3.700" fill="url(#egold)"/>
<rect x="28.900" y="1388.800" width="44.200" height="26" fill="url(#ebody)"/>
<rect x="28.900" y="1388.800" width="44.200" height="1.700" fill="url(#silver)"/>
<path d="M34.600 1392.500H54.800V1396.700L49.200 1399.200V1402.200L54.800 1404.200V1407.200L49.200 1409.700V1412.200H54.800V1414.800H34.600V1412.200H40.800V1409.700L34.600 1407.200V1404.200L40.800 1402.200V1399.200L34.600 1396.700Z" fill="url(#spool)"/>
<path d="M60.700 1396H72.600M60.700 1400H72.600M60.700 1404.100H72.600M60.700 1408.200H72.600M60.700 1412.300H72.600" stroke="#b48c3a" stroke-width="1.600"/>
<!--/BRUSHES-->
</svg>

<div id="puck"><div class="b"><svg width="151" height="151" viewBox="169.500 145.500 151 151"><!--PUCK-->
<g transform="translate(245 229.300) scale(1.08 1.1) translate(-52 -705.300)"><use href="#techpen"/></g>
<!--/PUCK--></svg></div><div class="t">4.1</div><div class="c"></div></div>

<div id="right"><div class="hd"></div><div class="sh"></div>
<div class="layer" style="top:614px;height:172px"></div>
<div class="layer" style="top:790.500px;height:175.500px"></div>
<div class="layer" style="top:967.600px;height:102.800px;background:linear-gradient(180deg,#fff 55%,#f2f2f2)"></div>
<div class="ft"></div>
</div>
<div id="wheel"><i></i></div>
<svg class="abs" id="ricons" style="left:1978px;top:250px" width="182" height="1207" viewBox="1978 250 182 1207">
<!--RICONS-->
<defs>
<clipPath id="th1"><rect x="1987.200" y="914.200" width="161.700" height="83.900"/></clipPath>
<clipPath id="eyew"><path d="M2024.200 962.300C2024 958 2026 955 2029.100 952.500C2034 946 2040 941 2046.400 938.900C2054 935.500 2063 933.800 2071.100 932.700C2080 931.300 2088 930.500 2095.800 930.200C2101 930 2105 930.300 2108.100 932.100C2111.500 934 2113.300 937.500 2113.100 941.400C2113.300 944.300 2113 946.800 2111.900 948.800C2109.500 953 2106 955.500 2102 956.200C2094 957.500 2085 957.900 2077.300 958.600C2068 959.500 2060 960.500 2052.600 961.700C2046 962.800 2041 964.200 2036.500 966C2033.500 967.200 2031 967.800 2029.100 967.300C2026.500 966.500 2024.800 964.800 2024.200 962.300Z"/></clipPath>
<radialGradient id="iris" cx="2057.500" cy="950" r="18.500" gradientUnits="userSpaceOnUse"><stop offset="0" stop-color="#f47c7c"/><stop offset=".55" stop-color="#ee4a4a"/><stop offset="1" stop-color="#e22424"/></radialGradient>
<linearGradient id="eyesh" x1="0" y1="930" x2="0" y2="968" gradientUnits="userSpaceOnUse"><stop offset="0" stop-color="#b9b9b9"/><stop offset=".35" stop-color="#fff"/><stop offset="1" stop-color="#fff"/></linearGradient>
<filter id="b1" x="-10%" y="-10%" width="120%" height="120%"><feGaussianBlur stdDeviation=".7"/></filter>
<linearGradient id="l3" x1="0" y1="0" x2="0" y2="1"><stop offset="0" stop-color="#fff"/><stop offset=".55" stop-color="#fff"/><stop offset="1" stop-color="#f2f2f2"/></linearGradient>
<symbol id="eyeic" viewBox="-16 -11 32 22" overflow="visible"><path d="M-15.400 0C-10 -7.500 -5 -10.500 0 -10.500C5 -10.500 10 -7.500 15.400 0C10 7.500 5 10.500 0 10.500C-5 10.500 -10 7.500 -15.400 0Z" fill="#8e8e8e"/><circle r="8.400" fill="#fff"/><circle r="4.400" fill="#8e8e8e"/></symbol>
</defs>
<!-- plus -->
<path d="M2069.900 286.500V319.500M2053.400 303H2086.400" stroke="#787878" stroke-width="4.100" stroke-linecap="round" fill="none"/>
<!-- layer 1: hidden eye + thumbnail -->
<g>
<clipPath id="hr"><path d="M1998 904.800L2025.500 876.400L2040 876L2040 912L1998 912Z"/></clipPath>
<path d="M1997.700 890.600C2003.100 883.200 2008.100 880.200 2013.200 880.200C2018.300 880.200 2023.300 883.200 2028.800 890.600C2023.300 898 2018.300 901 2013.200 901C2008.100 901 2003.100 898 1997.700 890.600Z" fill="#8e8e8e"/>
<circle cx="2013.200" cy="890.600" r="8.500" fill="#fff"/>
<circle cx="2013" cy="890.900" r="4.500" fill="#8e8e8e" clip-path="url(#hr)"/>
<path d="M1997.500 901.500L2021.200 877" stroke="#fff" stroke-width="2.800"/>
<path d="M2000.400 902.300L2023.100 878.900" stroke="#8e8e8e" stroke-width="2.800" stroke-linecap="round"/>
</g>
<rect x="1987.200" y="914.200" width="161.700" height="83.900" fill="#0a0a0a"/>
<g clip-path="url(#th1)">
<path d="M2025.500 962C2023 969 2021.800 978 2022.600 986.500C2024 979 2026.500 972 2031.500 966.500Z" fill="#2a2a2a" filter="url(#b1)"/>
<g filter="url(#b1)"><rect x="2020" y="926" width="98" height="46" fill="url(#eyesh)" clip-path="url(#eyew)"/></g>
<g clip-path="url(#eyew)"><circle cx="2057.500" cy="948" r="18.700" fill="url(#iris)" filter="url(#b1)"/>
<path d="M2051.500 934.500C2054.500 933.800 2059 933.300 2062.500 933.500C2062.500 940 2060.500 947 2057 952C2054 948 2051.800 941 2051.500 934.500Z" fill="#8c0b0b" filter="url(#b1)"/>
<path d="M2056.600 939.600L2073.800 936.500" stroke="#fff" stroke-width="2.200" stroke-linecap="round"/></g>
</g>
<!-- layer 2: selected -->
<rect x="1986.100" y="1049" width="167.900" height="164.200" rx="3" fill="#fff" stroke="#42a5f5" stroke-width="4"/>
<use href="#eyeic" x="1997.100" y="1055.700" width="32" height="22"/>
<g transform="matrix(0.09846 -0.005746 0.0026 0.10207 1959.340 1041.460)"><use href="#eye"/></g>
<g fill="#8f8f8f"><path d="M2002 1179.100H2021.900V1195H2002ZM2007.900 1180.900V1184.900H2012.100V1180.900ZM2015.900 1180.900V1184.900H2020.100V1180.900ZM2003.900 1185.100V1189.100H2007.900V1185.100ZM2011.900 1185.100V1189.100H2016.100V1185.100ZM2007.900 1189.300V1193.100H2012.100V1189.300ZM2015.900 1189.300V1193.100H2020.100V1189.300Z" fill-rule="evenodd"/>
<path d="M2006 1179.500V1174.800A6 6 0 0 1 2018 1174.800" fill="none" stroke="#8f8f8f" stroke-width="3.900"/></g>
<!-- layer 3: background -->
<use href="#eyeic" x="1997.100" y="1231.600" width="32" height="22"/>
<circle cx="2110.400" cy="1269.800" r="39.600" fill="#fff" stroke="#dfdfdf" stroke-width="1.200"/>
<!--/RICONS-->
</svg>

<svg id="sync" viewBox="-20 -20 40 40"><path d="M-15.9 -2.2A16 16 0 0 1 15.9 -2.2L9.8 -2.2A10 10 0 0 0 -9.8 -2.2ZM-15.9 2.2A16 16 0 0 0 15.9 2.2L9.8 2.2A10 10 0 0 1 -9.8 2.2Z" fill="#ebebeb"/></svg>
</body>
</html>
